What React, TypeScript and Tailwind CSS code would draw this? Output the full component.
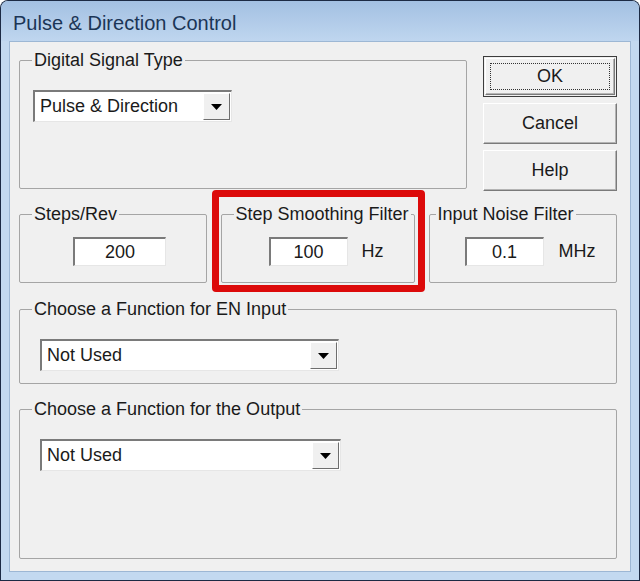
import React from 'react';

const font = { fontFamily: '"Liberation Sans", Arial, sans-serif' };

interface GroupBoxProps {
  title: string;
  className?: string;
  legendClass?: string;
  children?: React.ReactNode;
}

const GroupBox = ({ title, className = '', legendClass = 'ml-[12px]', children }: GroupBoxProps) => {
  return (
    <fieldset className={`border border-[#a5a5a5] rounded-[2px] min-w-0 ${className}`}>
      <legend className={`px-[2px] text-[18px] leading-[20px] text-[#1a1a1a] ${legendClass}`}>{title}</legend>
      {children}
    </fieldset>
  );
};

const ComboBox = ({ value, className = '' }: { value: string; className?: string }) => {
  return (
    <div
      className={`flex h-[32px] bg-white border-t-2 border-l-2 border-b border-r border-t-[#7a7a7a] border-l-[#7a7a7a] border-b-[#e6e6e6] border-r-[#e6e6e6] ${className}`}
    >
      <span className="flex-1 pl-[5px] text-[18px] leading-[29px] text-[#1a1a1a] truncate">{value}</span>
      <div className="w-[27px] mt-px mb-px mr-px flex items-center justify-center bg-[#f0f0f0] border border-t-white border-l-white border-b-[#6e6e6e] border-r-[#6e6e6e]">
        <svg width="11" height="6" viewBox="0 0 11 6">
          <path d="M0 0H11L5.5 6Z" fill="#000" />
        </svg>
      </div>
    </div>
  );
};

const TextBox = ({ value, className = '' }: { value: string; className?: string }) => {
  return (
    <div
      className={`h-[29px] bg-white flex items-center justify-center text-[18px] text-[#1a1a1a] border-t-2 border-l-2 border-b border-r border-t-[#7a7a7a] border-l-[#7a7a7a] border-b-[#e6e6e6] border-r-[#e6e6e6] ${className}`}
    >
      {value}
    </div>
  );
};

const DialogButton = ({ label, isDefault = false }: { label: string; isDefault?: boolean }) => {
  return (
    <button
      className={`h-[41px] w-full bg-[#f0f0f0] text-[18px] text-[#1a1a1a] ${
        isDefault ? 'border border-[#3c3c3c] p-px' : 'p-0'
      }`}
    >
      <div className="h-full w-full flex items-center justify-center border border-t-white border-l-white border-b-[#7a7a7a] border-r-[#7a7a7a] shadow-[inset_-1px_-1px_0_#b4b4b4]">
        {isDefault ? (
          <div className="w-[calc(100%-8px)] h-[calc(100%-8px)] border border-dotted border-[#333] flex items-center justify-center">
            {label}
          </div>
        ) : (
          label
        )}
      </div>
    </button>
  );
};

export default function App() {
  return (
    <div style={font} className="w-[640px] h-[581px] bg-[#1c2a44] rounded-t-[8px] p-px">
      <div className="h-full flex flex-col bg-[#c3d9f0] rounded-t-[7px]">
        <div className="h-[40px] shrink-0 flex items-center pl-[12px] pt-[3px] rounded-t-[7px] bg-gradient-to-b from-[#a3c0e2] to-[#bfd6ef]">
          <span className="text-[20px] text-[#1b3556]">Pulse &amp; Direction Control</span>
        </div>

        <div className="flex-1 mx-[8px] mb-[8px] bg-[#f0f0f0] border border-[#9db7d4] pt-[8px] pl-[9px] pr-[13px] flex flex-col">
          {/* top row: signal type + buttons */}
          <div className="flex gap-[16px]">
            <GroupBox title="Digital Signal Type" className="w-[448px] h-[139px]">
              <div className="pt-[20px] pl-[13px]">
                <ComboBox value="Pulse & Direction" className="w-[199px]" />
              </div>
            </GroupBox>
            <div className="w-[134px] mt-[6px] flex flex-col gap-[6px]">
              <DialogButton label="OK" isDefault />
              <DialogButton label="Cancel" />
              <DialogButton label="Help" />
            </div>
          </div>

          {/* filters */}
          <div className="flex gap-[14px] mt-[13px]">
            <GroupBox title="Steps/Rev" className="w-[188px] h-[79px]">
              <div className="pt-[13px] pl-[53px]">
                <TextBox value="200" className="w-[93px]" />
              </div>
            </GroupBox>
            <div className="relative">
              <GroupBox title="Step Smoothing Filter" className="w-[194px] h-[79px]">
                <div className="pt-[13px] pl-[47px] flex items-center">
                  <TextBox value="100" className="w-[79px]" />
                  <span className="ml-[14px] text-[18px] text-[#1a1a1a]">Hz</span>
                </div>
              </GroupBox>
              <div className="absolute -left-[9px] -right-[10px] -top-[14px] -bottom-[9px] border-[7px] border-[#dc0a0a] rounded-[4px] pointer-events-none" />
            </div>
            <GroupBox title="Input Noise Filter" className="w-[189px] h-[79px]" legendClass="ml-[6px]">
              <div className="pt-[13px] pl-[35px] flex items-center">
                <TextBox value="0.1" className="w-[79px]" />
                <span className="ml-[15px] text-[18px] text-[#1a1a1a]">MHz</span>
              </div>
            </GroupBox>
          </div>

          <GroupBox title="Choose a Function for EN Input" className="mt-[16px] h-[85px]">
            <div className="pt-[20px] pl-[20px]">
              <ComboBox value="Not Used" className="w-[299px]" />
            </div>
          </GroupBox>

          <GroupBox title="Choose a Function for the Output" className="mt-[15px] h-[160px]">
            <div className="pt-[20px] pl-[20px]">
              <ComboBox value="Not Used" className="w-[301px]" />
            </div>
          </GroupBox>
        </div>
      </div>
    </div>
  );
}
